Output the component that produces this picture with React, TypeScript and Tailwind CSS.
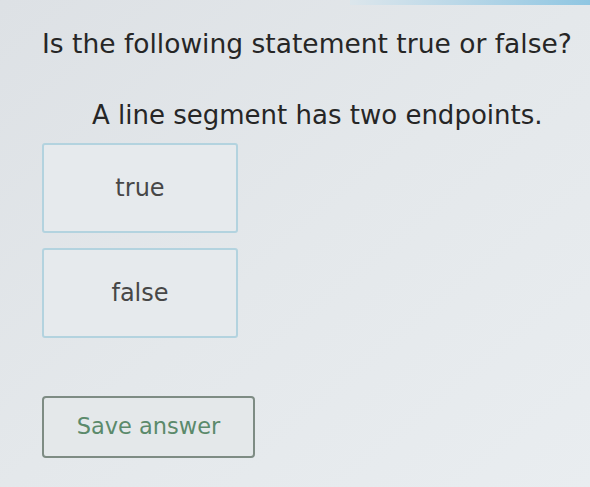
import React, { useState } from 'react';

const options = ['true', 'false'];

export default function App() {
  const [picked, setPicked] = useState<string | null>(null);

  return (
    <div
      className="relative h-[487px] w-[590px] overflow-hidden bg-gradient-to-br from-[#dde1e5] via-[#e4e8eb] to-[#e9edf0] text-[#2a2a2a]"
      style={{ fontFamily: '"DejaVu Sans", Verdana, sans-serif' }}
    >
      <div className="absolute right-0 top-0 h-[5px] w-[240px] bg-gradient-to-r from-[#dce6ec] to-[#8fc6e2]" />

      <div className="flex flex-col pl-[42px] pt-[26px]">
        <p className="text-[26.5px] leading-[36px] text-[#262626]">Is the following statement true or false?</p>
        <p className="mt-[35px] pl-[50px] text-[26px] leading-[36px] text-[#262626]">
          A line segment has two endpoints.
        </p>

        <div className="mt-[10px] flex flex-col gap-[15px]">
          {options.map((o) => (
            <button
              key={o}
              type="button"
              onClick={() => setPicked(o)}
              className={`flex h-[90px] w-[196px] items-center justify-center rounded-[3px] border-2 text-[24px] text-[#474747] ${
                picked === o ? 'border-[#5aa7c9] bg-[#d6e8f1]' : 'border-[#b3d3df] bg-[#e6eaed]'
              }`}
            >
              {o}
            </button>
          ))}
        </div>

        <button
          type="button"
          className="mt-[58px] flex h-[62px] w-[213px] items-center justify-center rounded-[4px] border-2 border-[#7e8c84] bg-[#e4e8ea] text-[22.5px] text-[#5b8a6b]"
        >
          Save answer
        </button>
      </div>
    </div>
  );
}
